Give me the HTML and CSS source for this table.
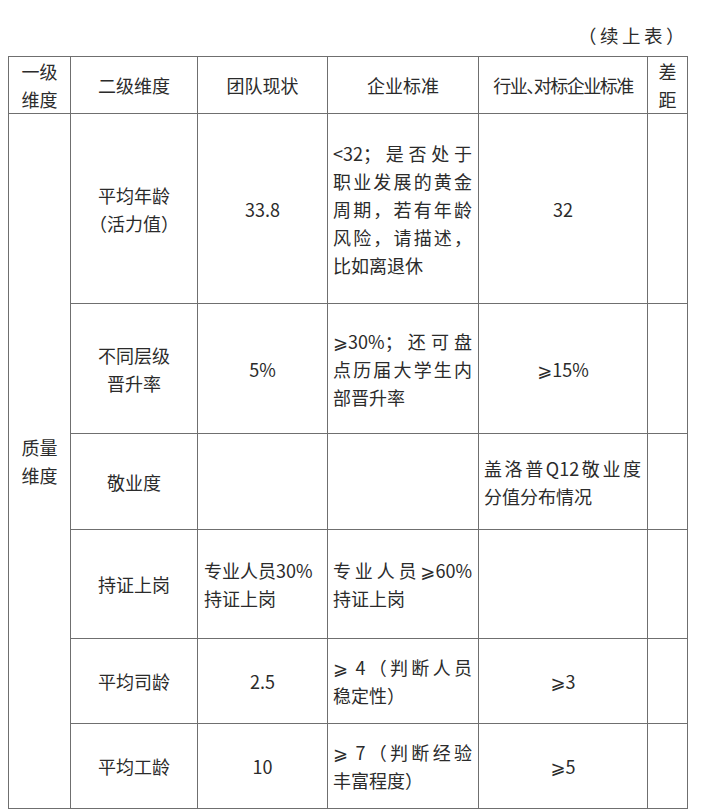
FILE: index.html
```html
<!DOCTYPE html>
<html lang="zh-CN">
<head>
<meta charset="utf-8">
<title>续上表</title>
<link rel="stylesheet" href="styles.css">
</head>
<body>
<div class="page">
  <div class="caption">（续上表）</div>
  <table class="grid">
    <colgroup>
      <col class="c1"><col class="c2"><col class="c3"><col class="c4"><col class="c5"><col class="c6">
    </colgroup>
    <thead>
      <tr class="r-head">
        <th>一级<br>维度</th>
        <th>二级维度</th>
        <th>团队现状</th>
        <th>企业标准</th>
        <th class="tight">行业、对标企业标准</th>
        <th>差<br>距</th>
      </tr>
    </thead>
    <tbody>
      <tr class="r1">
        <td rowspan="6">质量<br>维度</td>
        <td>平均年龄<br><span class="halt">（活力值）</span></td>
        <td>33.8</td>
        <td class="std">
          <span class="ln">&lt;32；是否处于</span>
          <span class="ln">职业发展的黄金</span>
          <span class="ln">周期，若有年龄</span>
          <span class="ln">风险，请描述，</span>
          <span class="ln last">比如离退休</span>
        </td>
        <td>32</td>
        <td></td>
      </tr>
      <tr class="r2">
        <td>不同层级<br>晋升率</td>
        <td>5%</td>
        <td class="std">
          <span class="ln">⩾30%；还可盘</span>
          <span class="ln">点历届大学生内</span>
          <span class="ln last">部晋升率</span>
        </td>
        <td>⩾15%</td>
        <td></td>
      </tr>
      <tr class="r3">
        <td>敬业度</td>
        <td></td>
        <td></td>
        <td class="std">
          <span class="ln">盖洛普Q12敬业度</span>
          <span class="ln last">分值分布情况</span>
        </td>
        <td></td>
      </tr>
      <tr class="r4">
        <td>持证上岗</td>
        <td class="left">专业人员30%<br>持证上岗</td>
        <td class="std">
          <span class="ln">专业人员⩾60%</span>
          <span class="ln last">持证上岗</span>
        </td>
        <td></td>
        <td></td>
      </tr>
      <tr class="r5">
        <td>平均司龄</td>
        <td>2.5</td>
        <td class="std">
          <span class="ln">⩾ 4（判断人员</span>
          <span class="ln last">稳定性）</span>
        </td>
        <td>⩾3</td>
        <td></td>
      </tr>
      <tr class="r6">
        <td>平均工龄</td>
        <td>10</td>
        <td class="std">
          <span class="ln">⩾ 7（判断经验</span>
          <span class="ln last">丰富程度）</span>
        </td>
        <td>⩾5</td>
        <td></td>
      </tr>
    </tbody>
  </table>
</div>
</body>
</html>
```

FILE: styles.css
```css
html, body {
  margin: 0;
  padding: 0;
  background: #ffffff;
}

body {
  font-family: "Noto Sans CJK SC", "DejaVu Sans", sans-serif;
  color: #2b2b2b;
  font-size: 18px;
}

.page {
  padding: 0 0 0 8px;
  width: 680px;
}

.caption {
  height: 56px;
  box-sizing: border-box;
  padding-top: 21px;
  padding-right: 0;
  text-align: right;
  font-size: 18.5px;
  line-height: 28px;
  letter-spacing: 3.5px;
}

.grid {
  border-collapse: collapse;
  table-layout: fixed;
  width: 679px;
}

.c1 { width: 62px; }
.c2 { width: 127px; }
.c3 { width: 130px; }
.c4 { width: 151px; }
.c5 { width: 169px; }
.c6 { width: 40px; }

.grid th,
.grid td {
  border: 1.5px solid #6f6f6f;
  padding: 0 6px;
  text-align: center;
  vertical-align: middle;
  font-weight: normal;
  line-height: 28px;
  font-size: 18px;
}

.grid th:first-child,
.grid td[rowspan] {
  padding: 0;
}

.grid th:last-child {
  padding: 0;
}

.r-head { height: 57px; }
.r1 { height: 190px; }
.r2 { height: 130px; }
.r3 { height: 96px; }
.r4 { height: 109px; }
.r5 { height: 85px; }
.r6 { height: 85px; }

.tight {
  letter-spacing: -1.5px;
  font-feature-settings: "halt";
}

.halt {
  font-feature-settings: "halt";
}

.grid td.std {
  text-align: left;
  padding: 0 6px 0 5px;
}

.ln {
  display: block;
  text-align: justify;
  text-align-last: justify;
}

.ln.last {
  text-align-last: left;
}

.grid td.left {
  text-align: left;
}
```
